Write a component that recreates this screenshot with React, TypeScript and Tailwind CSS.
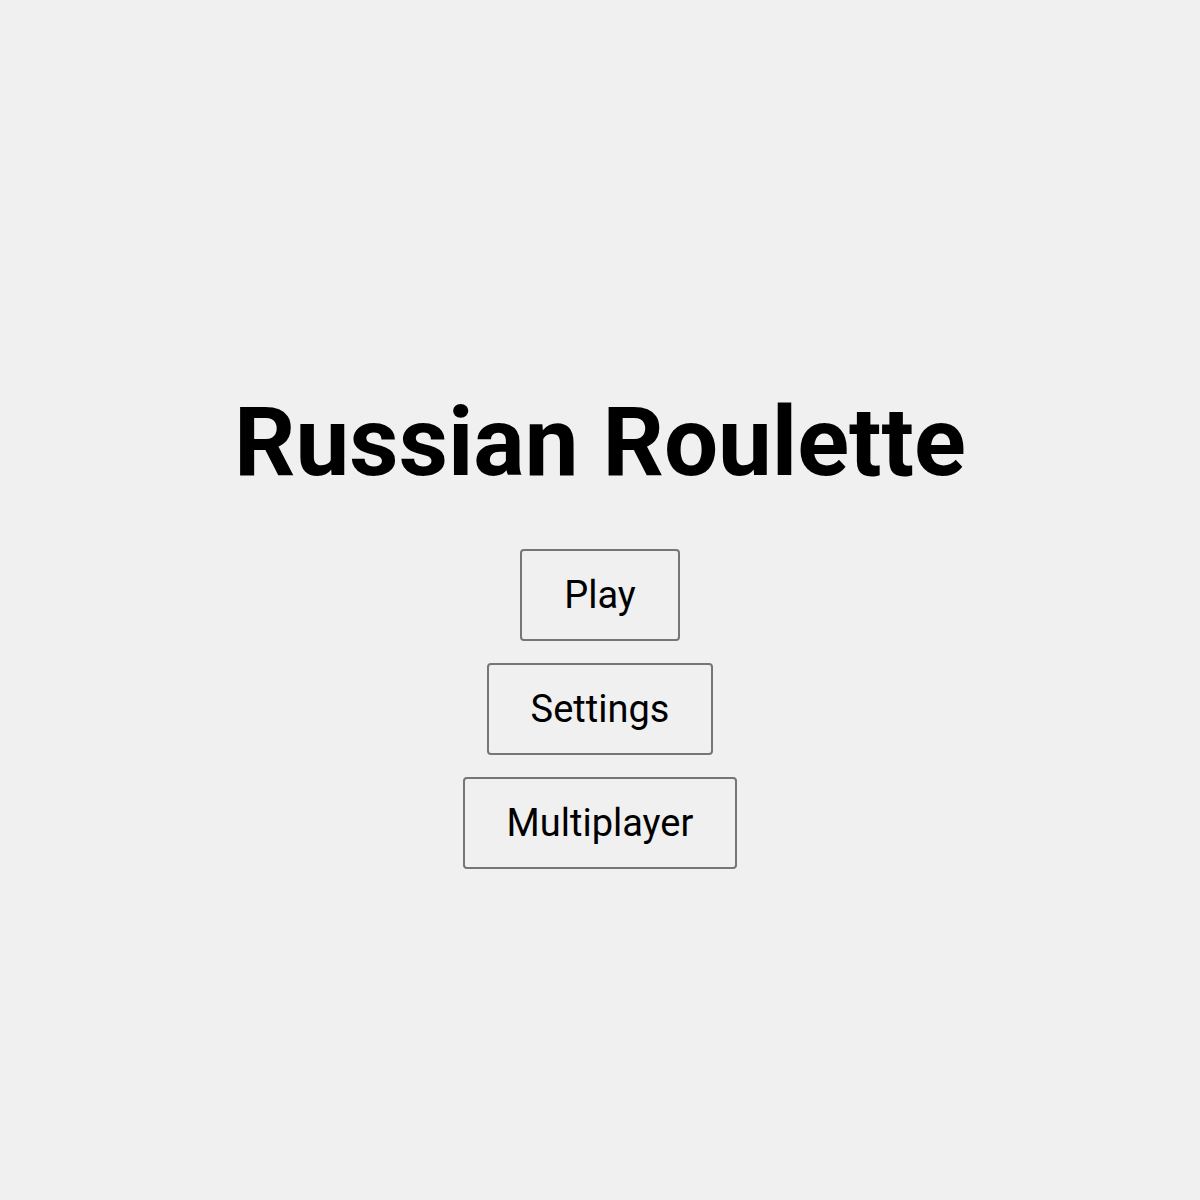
export default function App() {
  const buttons = ['Play', 'Settings', 'Multiplayer']

  return (
    <div
      className="min-h-screen w-full bg-[#f0f0f0] flex flex-col items-center justify-center"
      style={{ fontFamily: 'Roboto, "Noto Sans", sans-serif' }}
    >
      <h1 className="mt-[54px] text-[96px] leading-[113px] font-bold text-black">
        Russian Roulette
      </h1>

      <div className="mt-[50px] flex flex-col items-center gap-[22px]">
        {buttons.map((label) => (
          <button
            key={label}
            className="border-2 border-[#767676] rounded-[4px] bg-[#f0f0f0] px-[42px] py-[22px] text-[38px] leading-[44px] text-black"
          >
            {label}
          </button>
        ))}
      </div>
    </div>
  )
}
